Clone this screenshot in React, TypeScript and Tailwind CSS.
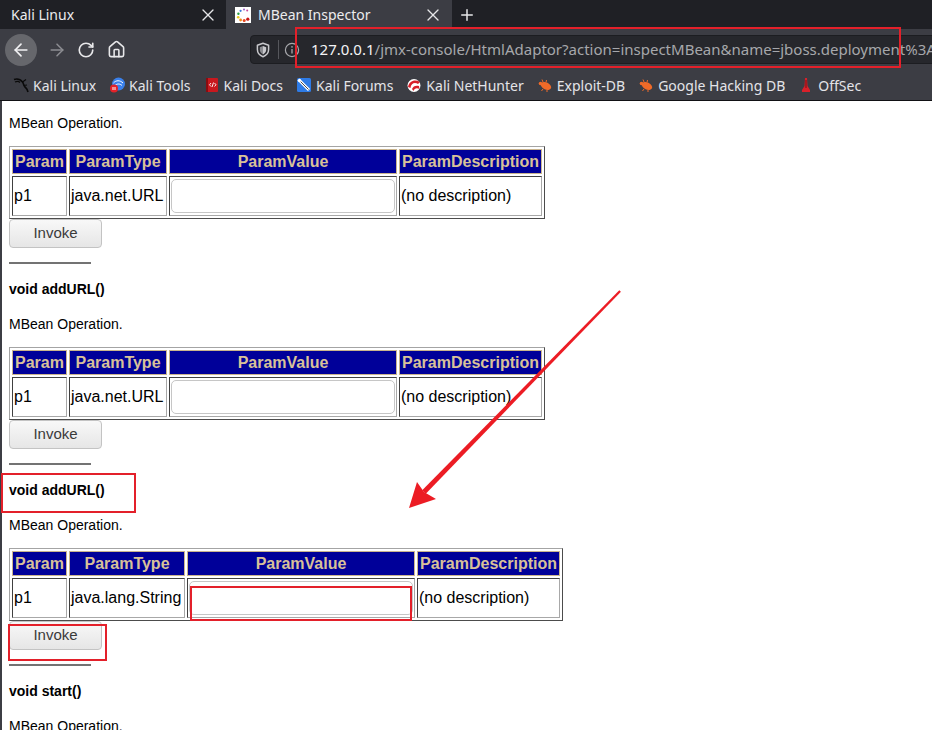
import React from 'react';
import { ArrowLeft, ArrowRight, RotateCw, House, X, Plus } from 'lucide-react';

function Favicon() {
  return (
    <svg width="16" height="16" viewBox="0 0 16 16">
      <rect width="16" height="16" fill="#ffffff" />
      <circle cx="9" cy="2.6" r="1" fill="#9a5ac8" />
      <circle cx="12.2" cy="3.6" r="1" fill="#c84a9a" />
      <circle cx="5.6" cy="3.8" r="1.1" fill="#3a7ad8" />
      <circle cx="3.4" cy="6.8" r="1.2" fill="#2aa048" />
      <circle cx="3.2" cy="10.2" r="1.3" fill="#e6c81e" />
      <circle cx="5.6" cy="13" r="1.4" fill="#f08a1e" />
      <circle cx="9.2" cy="13.6" r="1.5" fill="#e8461e" />
      <circle cx="12.8" cy="12.2" r="1.6" fill="#c81818" />
    </svg>
  );
}

function KaliIcon() {
  return (
    <svg width="16" height="16" viewBox="0 0 16 16">
      <path d="M1 2.5 C4 1.5 7.5 2.5 9.5 5 C10.8 6.8 10.5 9 12.5 10.5 C13.8 11.5 14.5 13 15 15" stroke="#0a0a0a" strokeWidth="1.6" fill="none" />
      <path d="M2 5 C4 4 6 4.5 7 5.5" stroke="#0a0a0a" strokeWidth="1.2" fill="none" />
      <path d="M9.5 5 L13 2.5 M10.5 8.5 L14 8" stroke="#0a0a0a" strokeWidth="1.1" fill="none" />
    </svg>
  );
}

function ToolsIcon() {
  return (
    <svg width="16" height="16" viewBox="0 0 16 16">
      <circle cx="9.5" cy="7" r="6.5" fill="#3a80ea" />
      <path d="M4.5 6 C7 3 11 3 14 6 M6 8.5 C8 6.5 11 6.5 13 8.5" stroke="#ffffff" strokeWidth="1" fill="none" />
      <circle cx="5" cy="11.5" r="4" fill="#e32229" />
      <path d="M4 10 V13 M6 10 V13" stroke="#ffffff" strokeWidth="1" />
    </svg>
  );
}

function DocsIcon() {
  return (
    <svg width="16" height="16" viewBox="0 0 16 16">
      <rect x="2" y="1" width="12" height="14" rx="1" fill="#c8181e" />
      <rect x="2" y="1" width="2" height="14" fill="#8a0c10" />
      <path d="M7 6 L5.5 7.8 L7 9.5 M10.5 6 L12 7.8 L10.5 9.5 M9.5 5.5 L8 10" stroke="#ffffff" strokeWidth="0.9" fill="none" />
    </svg>
  );
}

function ForumsIcon() {
  return (
    <svg width="16" height="16" viewBox="0 0 16 16">
      <rect x="1" y="1" width="14" height="14" rx="1.5" fill="#2e7be6" />
      <path d="M2.5 2.5 L13 13" stroke="#ffffff" strokeWidth="3" />
      <path d="M3 3 L12.5 12.5" stroke="#1a1a1a" strokeWidth="0.8" />
      <circle cx="3.5" cy="3.5" r="1.6" fill="#ffffff" />
    </svg>
  );
}

function NetHunterIcon() {
  return (
    <svg width="16" height="16" viewBox="0 0 16 16">
      <circle cx="8" cy="8.5" r="6.5" fill="#ffffff" />
      <path d="M2 10 C3 4 9 2 14 5 L12 7 C9 5 5 6 4.5 11 Z" fill="#d8202a" />
      <path d="M6 12 C7 9 10 8 13 9 L13.5 12 C11 10.5 8.5 11 7.5 14 Z" fill="#d8202a" />
    </svg>
  );
}

function BugIcon() {
  return (
    <svg width="16" height="16" viewBox="0 0 16 16">
      <ellipse cx="9" cy="9" rx="5.5" ry="3.5" transform="rotate(25 9 9)" fill="#f06a28" />
      <circle cx="3.5" cy="6.5" r="1.8" fill="#f06a28" />
      <path d="M6 5 L5 2.5 M9 5.5 L9.5 3 M6 12 L4.5 14 M10 13 L10 15" stroke="#f06a28" strokeWidth="1" />
    </svg>
  );
}

function OffSecIcon() {
  return (
    <svg width="16" height="16" viewBox="0 0 16 16">
      <path d="M7 1 L9 1 L9.5 9 L12 13 L12 15 L4 15 L4 13 L6.5 9 Z" fill="#d8202a" />
      <path d="M7.5 3 L8.5 3 L8.5 11 L7.5 11 Z" fill="#7a0c10" />
    </svg>
  );
}

function ShieldIcon() {
  return (
    <svg width="14" height="16" viewBox="0 0 14 16">
      <path d="M7 1.2 L12.6 3.2 V7.6 C12.6 11 10.2 13.6 7 14.8 C3.8 13.6 1.4 11 1.4 7.6 V3.2 Z" stroke="#c8c8cc" strokeWidth="1.5" fill="none" strokeLinejoin="round" />
      <path d="M7 4 L10.2 5.2 V7.8 C10.2 10 8.8 11.6 7 12.4 Z" fill="#c8c8cc" />
      <path d="M7 4 L3.8 5.2 V7.8 C3.8 10 5.2 11.6 7 12.4 Z" fill="#8a8b90" />
    </svg>
  );
}

function InfoIcon() {
  return (
    <svg width="16" height="16" viewBox="0 0 16 16">
      <circle cx="8" cy="8" r="6.6" stroke="#a8a9ad" strokeWidth="1.2" fill="none" />
      <path d="M8 7 V11.5" stroke="#a8a9ad" strokeWidth="1.3" />
      <circle cx="8" cy="4.9" r="0.8" fill="#a8a9ad" />
    </svg>
  );
}

function Bookmark({ icon, label }: { icon: React.ReactNode; label: string }) {
  return (
    <div className="flex items-center gap-[4px] shrink-0">
      {icon}
      <span className="whitespace-nowrap">{label}</span>
    </div>
  );
}

function ParamTable({ typeW, type }: { typeW: string; type: string }) {
  const th =
    'h-full bg-[#000099] border border-[#c9b48e] flex items-center justify-center font-bold text-[16px] leading-[18px] text-[#d8c199] shrink-0';
  const td =
    'h-full border border-t-[#404040] border-l-[#404040] border-r-[#a8a8a8] border-b-[#a8a8a8] flex items-center px-[1px] text-[16px] leading-[18px] shrink-0 whitespace-nowrap';
  return (
    <div className="mt-[15px] w-fit border border-t-[#a4a4a4] border-l-[#a4a4a4] border-r-[#4c4c4c] border-b-[#4c4c4c] p-[2px] flex flex-col gap-[2px]">
      <div className="flex gap-[2px] h-[25px] shrink-0">
        <div className={th + ' w-[55px]'}>Param</div>
        <div className={th + ' ' + typeW}>ParamType</div>
        <div className={th + ' w-[228px]'}>ParamValue</div>
        <div className={th + ' w-[143px]'}>ParamDescription</div>
      </div>
      <div className="flex gap-[2px] h-[40px] shrink-0">
        <div className={td + ' w-[55px]'}>p1</div>
        <div className={td + ' ' + typeW}>{type}</div>
        <div className={td + ' w-[228px] p-[2px]'}>
          <div className="w-full h-full rounded-[5px] border border-[#c6c6c6] bg-white" />
        </div>
        <div className={td + ' w-[143px]'}>(no description)</div>
      </div>
    </div>
  );
}

function InvokeButton() {
  return (
    <div className="w-[93px] h-[29px] rounded-[4px] border border-[#c3c3c3] bg-linear-to-b from-[#f8f8f8] to-[#e6e6e6] flex items-center justify-center text-[15px] text-[#3a3a3a]">
      Invoke
    </div>
  );
}

function Hr() {
  return <div className="mt-[14px] w-[82px] h-[2px] bg-[#737373]" />;
}

function Section({ title, typeW, type }: { title: string; typeW: string; type: string }) {
  return (
    <>
      <div className="mt-[17px] font-bold text-[14px] leading-[16px]">{title}</div>
      <div className="mt-[19px] text-[14px] leading-[16px]">MBean Operation.</div>
      <ParamTable typeW={typeW} type={type} />
      <InvokeButton />
      <Hr />
    </>
  );
}

export default function App() {
  return (
    <div className="relative w-[932px] h-[730px] overflow-hidden bg-white">
      {/* Tab bar */}
      <div className="h-[29px] bg-[#1f2025] flex font-['Noto_Sans',sans-serif] text-[14px] text-[#ececee]">
        <div className="w-[226px] flex items-center pl-[11px] pr-[8px]">
          <span className="flex-1 whitespace-nowrap">Kali Linux</span>
          <X size={20} strokeWidth={1.6} color="#e6e6e8" />
        </div>
        <div className="w-[226px] bg-[#3c3d44] flex items-center pl-[9px] pr-[9px]">
          <Favicon />
          <span className="ml-[7px] flex-1 whitespace-nowrap">MBean Inspector</span>
          <X size={20} strokeWidth={1.6} color="#e6e6e8" />
        </div>
        <div className="w-[30px] flex items-center justify-center">
          <Plus size={18} strokeWidth={2} color="#e6e6e8" />
        </div>
      </div>

      {/* Toolbar */}
      <div className="h-[41px] bg-[#3c3d44] flex items-center font-['Noto_Sans',sans-serif]">
        <div className="ml-[5px] w-[32px] h-[32px] rounded-full bg-[#66676c] flex items-center justify-center shrink-0">
          <ArrowLeft size={20} strokeWidth={2} color="#f2f2f4" />
        </div>
        <div className="ml-[10px] shrink-0">
          <ArrowRight size={20} strokeWidth={1.8} color="#8c8d92" />
        </div>
        <div className="ml-[10px] shrink-0">
          <RotateCw size={18} strokeWidth={2.2} color="#e8e8ea" />
        </div>
        <div className="ml-[12px] shrink-0">
          <House size={19} strokeWidth={2} color="#e8e8ea" />
        </div>
        <div className="ml-[124px] w-[700px] h-[29px] shrink-0 rounded-[4px] bg-[#26272c] border border-[#1c1d21] flex items-center">
          <div className="ml-[5px] shrink-0 flex">
            <ShieldIcon />
          </div>
          <div className="ml-[8px] w-[1px] h-[19px] bg-[#56575c] shrink-0" />
          <div className="ml-[5px] shrink-0 flex">
            <InfoIcon />
          </div>
          <div className="ml-[11px] whitespace-nowrap text-[15px] text-[#a6a7ab]">
            <span className="text-[#f4f4f6]">127.0.0.1</span>/jmx-console/HtmlAdaptor?action=inspectMBean&amp;name=jboss.deployment%3A
          </div>
        </div>
      </div>

      {/* Bookmarks bar */}
      <div className="h-[31px] bg-[#3c3d44] border-b border-[#111114] flex items-center pl-[13px] gap-[13px] font-['Noto_Sans',sans-serif] text-[14px] text-[#e4e4e8]">
        <Bookmark icon={<KaliIcon />} label="Kali Linux" />
        <Bookmark icon={<ToolsIcon />} label="Kali Tools" />
        <Bookmark icon={<DocsIcon />} label="Kali Docs" />
        <Bookmark icon={<ForumsIcon />} label="Kali Forums" />
        <Bookmark icon={<NetHunterIcon />} label="Kali NetHunter" />
        <Bookmark icon={<BugIcon />} label="Exploit-DB" />
        <Bookmark icon={<BugIcon />} label="Google Hacking DB" />
        <Bookmark icon={<OffSecIcon />} label="OffSec" />
      </div>

      {/* Page content */}
      <div className="h-[629px] overflow-hidden border-l-2 border-[#3c3d44] bg-white pl-[7px] pt-[14px] font-['Liberation_Sans',Arial,sans-serif] text-black">
        <div className="text-[14px] leading-[16px]">MBean Operation.</div>
        <ParamTable typeW="w-[98px]" type="java.net.URL" />
        <InvokeButton />
        <Hr />
        <Section title="void addURL()" typeW="w-[98px]" type="java.net.URL" />
        <Section title="void addURL()" typeW="w-[116px]" type="java.lang.String" />
        <div className="mt-[17px] font-bold text-[14px] leading-[16px]">void start()</div>
        <div className="mt-[19px] text-[14px] leading-[16px]">MBean Operation.</div>
      </div>

      {/* Annotations */}
      <div className="absolute left-[295px] top-[27px] w-[606px] h-[41px] border-2 border-[#e3202a] pointer-events-none" />
      <div className="absolute left-[1px] top-[473px] w-[135px] h-[40px] border-2 border-[#e3202a] pointer-events-none" />
      <div className="absolute left-[190px] top-[586px] w-[222px] h-[35px] border-2 border-[#e3202a] pointer-events-none" />
      <div className="absolute left-[8px] top-[624px] w-[99px] h-[37px] border-2 border-[#e3202a] pointer-events-none" />
      <svg className="absolute left-0 top-0 pointer-events-none" width="932" height="730" viewBox="0 0 932 730">
        <polygon points="619.3,290.3 620.9,291.7 425.8,493.7 422.2,490.3" fill="#ec1c24" />
        <polygon points="409,508 417,482 424,492 436,499" fill="#ec1c24" />
      </svg>
    </div>
  );
}
